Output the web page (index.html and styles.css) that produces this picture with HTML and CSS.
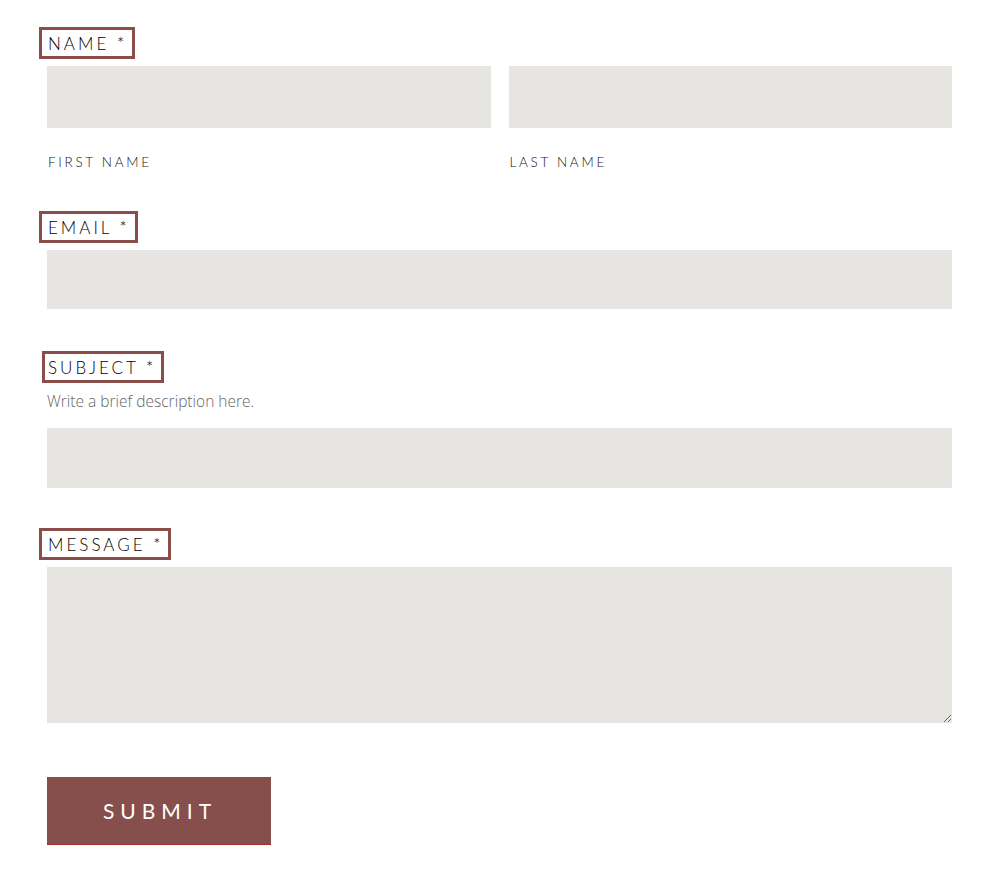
FILE: index.html
```html
<!DOCTYPE html>
<html lang="en">
<head>
    <meta charset="UTF-8">
    <meta name="viewport" content="width=device-width, initial-scale=1.0">
    <title>Contact</title>
    <link rel="stylesheet" href="styles.css">
</head>
<body>
    <form class="contact-form">
        <div class="field field-name">
            <label class="field-label">NAME *</label>
            <div class="name-row">
                <div class="name-part">
                    <input type="text" class="text-input">
                    <span class="sub-label">FIRST NAME</span>
                </div>
                <div class="name-part">
                    <input type="text" class="text-input">
                    <span class="sub-label">LAST NAME</span>
                </div>
            </div>
        </div>

        <div class="field field-email">
            <label class="field-label">EMAIL *</label>
            <input type="email" class="text-input tall">
        </div>

        <div class="field field-subject">
            <label class="field-label shifted">SUBJECT *</label>
            <p class="hint">Write a brief description here.</p>
            <input type="text" class="text-input tall">
        </div>

        <div class="field field-message">
            <label class="field-label">MESSAGE *</label>
            <textarea class="text-area"></textarea>
        </div>

        <button type="submit" class="submit-btn">SUBMIT</button>
    </form>
</body>
</html>
```

FILE: styles.css
```css
body {
    margin: 0;
    padding: 0;
    background: #ffffff;
    font-family: "Lato", "Open Sans", sans-serif;
    color: #222;
}
.contact-form {
    width: 905px;
    padding: 27px 0 0 47px;
}
.field {
    display: flex;
    flex-direction: column;
    align-items: flex-start;
}
.field-label {
    display: block;
    box-sizing: border-box;
    height: 32px;
    margin-left: -8px;
    padding: 2px 5px 0 6px;
    border: 3px solid #8a4d4a;
    font-size: 17px;
    line-height: 24px;
    font-weight: 300;
    letter-spacing: 3px;
    color: #000;
}
.field-label.shifted {
    margin-left: -5px;
    padding-left: 3px;
}
.name-row {
    display: flex;
    gap: 18px;
    width: 100%;
    margin-top: 7px;
}
.name-part {
    flex: 1;
    display: flex;
    flex-direction: column;
}
.text-input {
    box-sizing: border-box;
    width: 100%;
    height: 62px;
    border: none;
    background: #e6e5e2;
    margin: 0;
    outline: none;
}
.text-input.tall {
    height: 59px;
}
.sub-label {
    margin-top: 26px;
    padding-left: 1px;
    font-size: 13.5px;
    line-height: 16px;
    letter-spacing: 2.7px;
    font-weight: 300;
    color: #111;
}
.field-email {
    margin-top: 41px;
}
.field-email .text-input {
    margin-top: 7px;
}
.field-subject {
    margin-top: 42px;
}
.hint {
    margin: 8px 0 0 0;
    font-family: "Open Sans", sans-serif;
    font-size: 15.5px;
    line-height: 20px;
    font-weight: 300;
    color: #666;
}
.field-subject .text-input {
    margin-top: 17px;
    height: 60px;
}
.field-message {
    margin-top: 40px;
}
.text-area {
    box-sizing: border-box;
    width: 100%;
    height: 156px;
    margin-top: 7px;
    border: none;
    background: #e6e5e2;
    outline: none;
}
.submit-btn {
    display: block;
    margin-top: 54px;
    width: 224px;
    height: 68px;
    background: #874f4c;
    color: #ffffff;
    border: none;
    border-bottom: 1px solid #a0302c;
    font-family: "Lato", sans-serif;
    font-size: 21px;
    letter-spacing: 6px;
    padding-left: 8px;
    cursor: pointer;
}
```
